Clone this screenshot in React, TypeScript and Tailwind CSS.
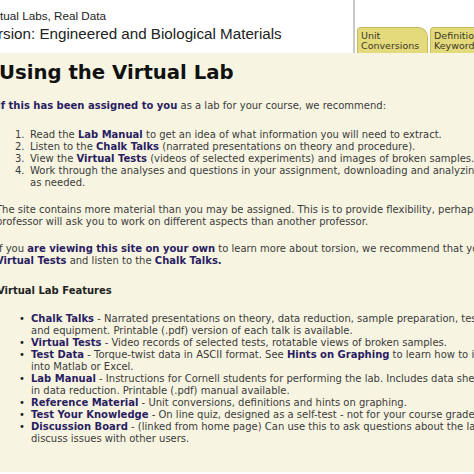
export default function App() {
  const link = "font-bold text-[#2a1d63]";
  return (
    <div className="w-[474px] h-[474px] overflow-hidden bg-white font-['DejaVu_Sans',Verdana,sans-serif] text-[#3b3b3b]">
      <div className="h-[53px] flex">
        <div className="w-[353px] shrink-0 pt-[8px] font-['Liberation_Sans',Arial,sans-serif] text-[#222] whitespace-nowrap overflow-hidden">
          <div className="text-[11.7px] leading-[16px] ml-[-14px]">Virtual Labs, Real Data</div>
          <div className="text-[15.2px] leading-[20px] ml-[-18px]">Torsion: Engineered and Biological Materials</div>
        </div>
        <div className="w-[2px] shrink-0 bg-[#c9c9c9]" />
        <div className="flex-1 flex items-end gap-[2px] pl-[2px] overflow-hidden">
          <div className="w-[71px] h-[26px] shrink-0 bg-[#e4da7c] border-t border-l border-r border-[#c7ba5a] rounded-tl-[4px] rounded-tr-[10px] pl-[3px] pt-[3px] text-[9.5px] leading-[10px] text-[#3a3726]">
            Unit<br />Conversions
          </div>
          <div className="w-[71px] h-[26px] shrink-0 bg-[#e4da7c] border-t border-l border-r border-[#c7ba5a] rounded-tl-[4px] rounded-tr-[10px] pl-[3px] pt-[3px] text-[9.5px] leading-[10px] text-[#3a3726] whitespace-nowrap">
            Definitions<br />Keywords
          </div>
        </div>
      </div>
      <div className="h-[419px] bg-[#f7f5e1] whitespace-nowrap text-[10px] leading-[12px]">
        <h1 className="pt-[7px] ml-[-1px] text-[19.7px] leading-[26px] font-bold text-[#111]">Using the Virtual Lab</h1>
        <p className="mt-[14px] ml-[-3px]">
          <span className={link}>If this has been assigned to you</span> as a lab for your course, we recommend:
        </p>
        <ol className="mt-[17px] pl-[15px]">
          <li className="flex"><span className="w-[15px] shrink-0">1.</span><span className="shrink-0">Read the <span className={link}>Lab Manual</span> to get an idea of what information you will need to extract.</span></li>
          <li className="flex"><span className="w-[15px] shrink-0">2.</span><span className="shrink-0">Listen to the <span className={link}>Chalk Talks</span> (narrated presentations on theory and procedure).</span></li>
          <li className="flex"><span className="w-[15px] shrink-0">3.</span><span className="shrink-0">View the <span className={link}>Virtual Tests</span> (videos of selected experiments) and images of broken samples.</span></li>
          <li className="flex"><span className="w-[15px] shrink-0">4.</span><span className="shrink-0">Work through the analyses and questions in your assignment, downloading and analyzing data<br />as needed.</span></li>
        </ol>
        <p className="mt-[15px] ml-[-4px]">
          The site contains more material than you may be assigned. This is to provide flexibility, perhaps one<br />
          professor will ask you to work on different aspects than another professor.
        </p>
        <p className="mt-[15px] ml-[-4px]">
          If you <span className={link}>are viewing this site on your own</span> to learn more about torsion, we recommend that you view the<br />
          <span className={link}>Virtual Tests</span> and listen to the <span className={link}>Chalk Talks.</span>
        </p>
        <p className="mt-[18px] ml-[-3px] font-bold text-[#222]">Virtual Lab Features</p>
        <ul className="mt-[16px] pl-[19px]">
          {[
            [<><span className={link}>Chalk Talks</span> - Narrated presentations on theory, data reduction, sample preparation, test procedure</>, "and equipment. Printable (.pdf) version of each talk is available."],
            [<><span className={link}>Virtual Tests</span> - Video records of selected tests, rotatable views of broken samples.</>],
            [<><span className={link}>Test Data</span> - Torque-twist data in ASCII format. See <span className={link}>Hints on Graphing</span> to learn how to import</>, "into Matlab or Excel."],
            [<><span className={link}>Lab Manual</span> - Instructions for Cornell students for performing the lab. Includes data sheets and help</>, "in data reduction. Printable (.pdf) manual available."],
            [<><span className={link}>Reference Material</span> - Unit conversions, definitions and hints on graphing.</>],
            [<><span className={link}>Test Your Knowledge</span> - On line quiz, designed as a self-test - not for your course grade.</>],
            [<><span className={link}>Discussion Board</span> - (linked from home page) Can use this to ask questions about the lab and</>, "discuss issues with other users."],
          ].map((item, i) => (
            <li key={i} className="flex">
              <span className="w-[12px] shrink-0 text-[#222]">•</span>
              <span className="shrink-0">
                {item[0]}
                {item[1] && (<><br />{item[1]}</>)}
              </span>
            </li>
          ))}
        </ul>
      </div>
    </div>
  );
}
